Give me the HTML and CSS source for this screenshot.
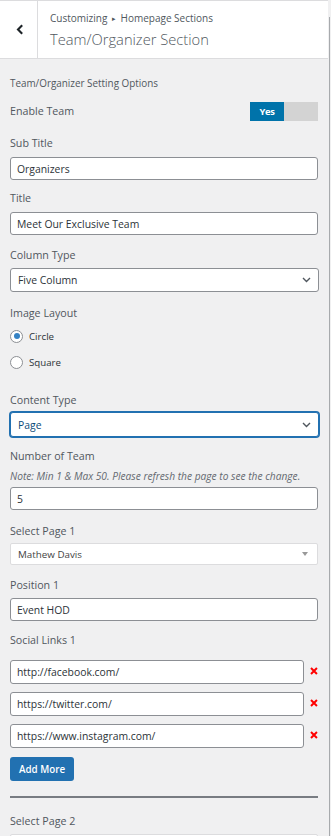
FILE: index.html
```html
<!DOCTYPE html>
<html lang="en">
<head>
<meta charset="utf-8">
<title>Team/Organizer Section</title>
<link rel="stylesheet" href="styles.css">
</head>
<body>
<div class="panel">
  <header class="header">
    <button class="back" type="button" aria-label="Back">
      <svg width="8" height="11" viewBox="0 0 8 11"><path d="M6.2 1.2 L2 5.5 L6.2 9.8" fill="none" stroke="#1d2327" stroke-width="2.1"/></svg>
    </button>
    <div class="titles">
      <div class="crumb">Customizing <span class="tri">&#9656;</span> Homepage Sections</div>
      <h3 class="section-title">Team/Organizer Section</h3>
    </div>
  </header>

  <main class="content">
    <div class="desc">Team/Organizer Setting Options</div>

    <div class="toggle-row">
      <span class="label">Enable Team</span>
      <div class="toggle"><span class="toggle-on">Yes</span><span class="toggle-off"></span></div>
    </div>

    <div class="control c-sub">
      <span class="label">Sub Title</span>
      <input class="field" type="text" value="Organizers">
    </div>

    <div class="control c-title">
      <span class="label">Title</span>
      <input class="field" type="text" value="Meet Our Exclusive Team">
    </div>

    <div class="control c-col">
      <span class="label">Column Type</span>
      <div class="select">
        <span>Five Column</span>
        <svg class="chev" width="9" height="6" viewBox="0 0 9 6"><path d="M1 1 L4.5 4.5 L8 1" fill="none" stroke="#50575e" stroke-width="1.4"/></svg>
      </div>
    </div>

    <div class="control c-img">
      <span class="label">Image Layout</span>
      <div class="radios">
        <div class="radio-row"><span class="radio checked"></span><span class="radio-text">Circle</span></div>
        <div class="radio-row"><span class="radio"></span><span class="radio-text">Square</span></div>
      </div>
    </div>

    <div class="control c-content">
      <span class="label">Content Type</span>
      <div class="select focus">
        <span>Page</span>
        <svg class="chev" width="9" height="6" viewBox="0 0 9 6"><path d="M1 1 L4.5 4.5 L8 1" fill="none" stroke="#50575e" stroke-width="1.4"/></svg>
      </div>
    </div>

    <div class="control c-num">
      <span class="label">Number of Team</span>
      <span class="note">Note: Min 1 &amp; Max 50. Please refresh the page to see the change.</span>
      <input class="field f-num" type="text" value="5">
    </div>

    <div class="control c-page">
      <span class="label">Select Page 1</span>
      <div class="select2">
        <span>Mathew Davis</span>
        <span class="s2-arrow"></span>
      </div>
    </div>

    <div class="control c-pos">
      <span class="label">Position 1</span>
      <input class="field" type="text" value="Event HOD">
    </div>

    <div class="control c-social">
      <span class="label">Social Links 1</span>
      <div class="links">
        <div class="link-row">
          <input class="field link" type="text" value="http://facebook.com/">
          <svg class="remove" width="8" height="8" viewBox="0 0 8 8"><path d="M1 1 L7 7 M7 1 L1 7" stroke="#f00" stroke-width="2"/></svg>
        </div>
        <div class="link-row">
          <input class="field link" type="text" value="https://twitter.com/">
          <svg class="remove" width="8" height="8" viewBox="0 0 8 8"><path d="M1 1 L7 7 M7 1 L1 7" stroke="#f00" stroke-width="2"/></svg>
        </div>
        <div class="link-row">
          <input class="field link" type="text" value="https://www.instagram.com/">
          <svg class="remove" width="8" height="8" viewBox="0 0 8 8"><path d="M1 1 L7 7 M7 1 L1 7" stroke="#f00" stroke-width="2"/></svg>
        </div>
      </div>
      <button class="add-more" type="button">Add More</button>
    </div>

    <hr class="divider">

    <div class="control c-page2">
      <span class="label">Select Page 2</span>
      <div class="select2"><span></span><span class="s2-arrow"></span></div>
    </div>
  </main>
</div>
<div class="scroll-line"></div>
</body>
</html>
```

FILE: styles.css
```css
html, body {
  margin: 0;
  padding: 0;
}
body {
  background: #f0f0f1;
  font-family: "Open Sans", "Noto Sans", sans-serif;
  color: #50575e;
  overflow: hidden;
  height: 836px;
}
.panel {
  width: 328px;
}
.header {
  display: flex;
  height: 57px;
  background: #fff;
  border-top: 1px solid #dcdcde;
  border-bottom: 1px solid #dcdcde;
}
.back {
  width: 38px;
  border: 0;
  border-right: 1px solid #dcdcde;
  background: #fff;
  padding: 0 0 0 3px;
  margin: 0;
  display: flex;
  align-items: center;
  justify-content: center;
}
.titles {
  padding: 10px 0 0 12px;
}
.crumb {
  font-size: 10px;
  line-height: 14px;
  color: #50575e;
}
.tri {
  font-size: 7px;
  position: relative;
  top: -1px;
  margin: 0 2px;
}
.section-title {
  margin: 2px 0 0;
  font-size: 14.7px;
  line-height: 20px;
  font-weight: 300;
  color: #50575e;
}
.content {
  padding: 17px 10px 0 10px;
  display: flex;
  flex-direction: column;
}
.desc {
  font-size: 9.9px;
  line-height: 14px;
  color: #50575e;
}
.label {
  font-size: 10.7px;
  line-height: 17px;
  color: #50575e;
}
.toggle-row {
  margin-top: 12px;
  height: 19px;
  display: flex;
  justify-content: space-between;
  align-items: center;
}
.toggle {
  display: flex;
  width: 68px;
  height: 19px;
}
.toggle-on {
  width: 34px;
  background: #0073aa;
  color: #fff;
  font-weight: 700;
  font-size: 9.4px;
  line-height: 19px;
  text-align: center;
  letter-spacing: -0.3px;
}
.toggle-off {
  width: 34px;
  background: #d3d3d3;
}
.control {
  display: flex;
  flex-direction: column;
}
.field {
  box-sizing: border-box;
  width: 308px;
  height: 23px;
  margin: 5px 0 0;
  padding: 0 6px;
  border: 1px solid #8c8f94;
  border-radius: 3px;
  background: #fff;
  font-family: "Open Sans", "Noto Sans", sans-serif;
  font-size: 10.4px;
  color: #2c3338;
  outline: none;
}
.c-sub { margin-top: 14px; }
.c-title { margin-top: 10px; }
.c-col { margin-top: 12px; }
.select {
  box-sizing: border-box;
  width: 309px;
  height: 24px;
  margin-top: 4px;
  padding: 0 7px 0 7px;
  border: 1px solid #8c8f94;
  border-radius: 3px;
  background: #fff;
  display: flex;
  align-items: center;
  justify-content: space-between;
  font-size: 10.4px;
  color: #2c3338;
}
.select.focus {
  height: 25px;
  margin-top: 3px;
  border-color: #2271b1;
  box-shadow: 0 0 0 1px #2271b1;
  color: #0a4b78;
}
.chev {
  display: block;
}
.c-img { margin-top: 13px; }
.radios {
  display: flex;
  flex-direction: column;
  margin-top: 1px;
}
.radio-row {
  height: 26px;
  display: flex;
  align-items: center;
}
.radio {
  box-sizing: border-box;
  width: 13px;
  height: 13px;
  border: 1px solid #8c8f94;
  border-radius: 50%;
  background: #fff;
  display: flex;
  align-items: center;
  justify-content: center;
}
.radio.checked::before {
  content: "";
  width: 6px;
  height: 6px;
  border-radius: 50%;
  background: #3582c4;
}
.radio-text {
  margin-left: 6px;
  font-size: 9.7px;
  color: #2c3338;
}
.c-content { margin-top: 17px; }
.c-num { margin-top: 11px; }
.note {
  margin-top: 4px;
  font-size: 10.2px;
  line-height: 14px;
  font-style: italic;
  color: #646970;
}
.f-num { margin-top: 4px; }
.c-page { margin-top: 13px; }
.select2 {
  box-sizing: border-box;
  width: 308px;
  height: 22px;
  margin-top: 3px;
  padding: 0 8px 0 7px;
  border: 1px solid #dcdcde;
  border-radius: 2px;
  background: #fff;
  display: flex;
  align-items: center;
  justify-content: space-between;
  font-size: 9.8px;
  color: #444;
}
.s2-arrow {
  width: 0;
  height: 0;
  border-left: 3px solid transparent;
  border-right: 3px solid transparent;
  border-top: 4px solid #999;
  margin-right: 1px;
}
.c-pos { margin-top: 12px; }
.c-pos .field { margin-top: 4px; }
.c-social { margin-top: 11px; }
.links {
  display: flex;
  flex-direction: column;
  gap: 8px;
  margin-top: 11px;
}
.link-row {
  display: flex;
  align-items: center;
}
.field.link {
  width: 296px;
  height: 24px;
  margin: 0;
}
.remove {
  margin-left: 6px;
  margin-top: -3px;
}
.add-more {
  align-self: flex-start;
  margin-top: 9px;
  height: 24px;
  width: 64px;
  padding: 0;
  border: 0;
  border-radius: 3px;
  background: #2271b1;
  color: #fff;
  font-family: "Open Sans", "Noto Sans", sans-serif;
  font-size: 9.8px;
  font-weight: 600;
}
.divider {
  margin: 15px 0 0;
  width: 308px;
  height: 0;
  border: 0;
  border-top: 2px solid #787c82;
}
.c-page2 { margin-top: 15px; }
.c-page2 .select2 { margin-top: 4px; }
.scroll-line {
  position: fixed;
  left: 329px;
  top: 17px;
  bottom: 0;
  width: 1px;
  background: #a7aaad;
}
```
